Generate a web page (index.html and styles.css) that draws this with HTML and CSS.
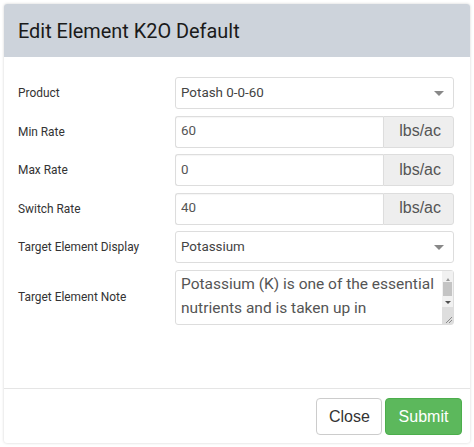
FILE: index.html
```html
<!DOCTYPE html>
<html>
<head>
<meta charset="utf-8">
<link rel="stylesheet" href="styles.css">
</head>
<body>
<div class="modal">
  <div class="modal-header">
    <h4 class="modal-title">Edit Element K2O Default</h4>
  </div>
  <div class="modal-body">
    <div class="form-row">
      <label class="form-label">Product</label>
      <div class="select">
        <span class="select-value">Potash 0-0-60</span>
        <span class="select-arrow"></span>
      </div>
    </div>
    <div class="form-row">
      <label class="form-label">Min Rate</label>
      <div class="input-group">
        <input class="input" type="text" value="60">
        <span class="addon">lbs/ac</span>
      </div>
    </div>
    <div class="form-row">
      <label class="form-label">Max Rate</label>
      <div class="input-group">
        <input class="input" type="text" value="0">
        <span class="addon">lbs/ac</span>
      </div>
    </div>
    <div class="form-row">
      <label class="form-label">Switch Rate</label>
      <div class="input-group">
        <input class="input" type="text" value="40">
        <span class="addon">lbs/ac</span>
      </div>
    </div>
    <div class="form-row">
      <label class="form-label">Target Element Display</label>
      <div class="select">
        <span class="select-value">Potassium</span>
        <span class="select-arrow"></span>
      </div>
    </div>
    <div class="form-row form-row-tall">
      <label class="form-label">Target Element Note</label>
      <div class="textarea-wrap">
        <textarea class="textarea">Potassium (K) is one of the essential nutrients and is taken up in significant amounts by crops. Potassium is vital to photosynthesis and water regulation.</textarea>
        <div class="scrollbar">
          <span class="sb-up"></span>
          <span class="sb-thumb"></span>
          <span class="sb-space"></span>
          <span class="sb-down"></span>
          <span class="sb-corner">
            <svg width="10" height="10" viewBox="0 0 10 10"><path d="M9 3 L3 9 M9 6 L6 9" stroke="#8a8a8a" stroke-width="1" fill="none"/></svg>
          </span>
        </div>
      </div>
    </div>
  </div>
  <div class="modal-footer">
    <button class="btn btn-default">Close</button>
    <button class="btn btn-success">Submit</button>
  </div>
</div>
</body>
</html>
```
FILE: styles.css
```css
html, body {
  margin: 0;
  padding: 0;
  background: #ffffff;
}
body {
  font-family: Roboto, "Liberation Sans", sans-serif;
  color: #333;
}
.modal {
  margin: 4px;
  width: 466px;
  height: 439px;
  box-sizing: border-box;
  background: #fff;
  border-radius: 3px;
  box-shadow: 0 0 3px rgba(0,0,0,0.18);
  display: flex;
  flex-direction: column;
  overflow: hidden;
}
.modal-header {
  background: #cdd3db;
  height: 53px;
  display: flex;
  align-items: center;
  padding: 0 14px;
  flex: none;
}
.modal-title {
  margin: 0;
  font-size: 19.9px;
  font-weight: 400;
  color: #1a1a1a;
  padding-top: 1px;
}
.modal-body {
  padding: 20px 16px 0 14px;
  display: flex;
  flex-direction: column;
  gap: 6.5px;
  flex: 1;
}
.form-row {
  display: grid;
  grid-template-columns: 157px 1fr;
  align-items: center;
  height: 32px;
}
.form-row-tall {
  height: 55px;
}
.form-label {
  font-size: 11.9px;
  color: #333;
}
.select {
  height: 32px;
  box-sizing: border-box;
  border: 1px solid #ddd;
  border-radius: 3px;
  display: flex;
  align-items: center;
  justify-content: space-between;
  padding: 0 9px 2px 5px;
}
.select-value {
  font-size: 13.4px;
  color: #444;
}
.select-arrow {
  width: 0;
  height: 0;
  border-left: 5px solid transparent;
  border-right: 5px solid transparent;
  border-top: 5px solid #888;
  margin-top: 2px;
}
.input-group {
  display: flex;
  height: 32px;
}
.input {
  flex: 1;
  min-width: 0;
  height: 32px;
  box-sizing: border-box;
  border: 1px solid #ddd;
  border-right: none;
  border-radius: 3px 0 0 3px;
  padding: 0 5px 2px 5px;
  font-family: Roboto, "Liberation Sans", sans-serif;
  font-size: 13.4px;
  color: #555;
  box-shadow: inset 0 1px 1px rgba(0,0,0,0.04);
  outline: none;
}
.addon {
  width: 71px;
  box-sizing: border-box;
  background: #eee;
  border: 1px solid #ddd;
  border-radius: 0 3px 3px 0;
  display: flex;
  align-items: center;
  justify-content: flex-end;
  padding: 0 12px 1px 0;
  font-family: "Liberation Sans", Arial, sans-serif;
  font-size: 16px;
  color: #555;
}
.textarea-wrap {
  position: relative;
  height: 55px;
}
.textarea {
  display: block;
  height: 55px;
  box-sizing: border-box;
  width: 100%;
  border: 1px solid #ddd;
  border-radius: 3px;
  padding: 1px 16px 1px 5px;
  font-family: Roboto, "Liberation Sans", sans-serif;
  font-size: 15.5px;
  line-height: 24px;
  color: #555;
  resize: none;
  outline: none;
  overflow: hidden;
  margin: 0;
}
.scrollbar {
  position: absolute;
  top: 1px;
  right: 1px;
  bottom: 1px;
  width: 11px;
  background: #f1f1f1;
  display: flex;
  flex-direction: column;
  align-items: center;
}
.sb-up {
  flex: none;
  margin-top: 4px;
  height: 6px;
  width: 0;
  border-left: 2.5px solid transparent;
  border-right: 2.5px solid transparent;
  border-bottom: 3px solid #9a9a9a;
  box-sizing: border-box;
}
.sb-thumb {
  flex: none;
  margin-top: 1px;
  width: 9px;
  height: 14px;
  background: #c4c4c4;
}
.sb-space {
  flex: 1;
}
.sb-down {
  flex: none;
  margin-bottom: 3px;
  width: 0;
  height: 0;
  border-left: 3px solid transparent;
  border-right: 3px solid transparent;
  border-top: 3.5px solid #505050;
}
.sb-corner {
  flex: none;
  width: 11px;
  height: 17px;
  background: #dedede;
  display: flex;
  align-items: flex-end;
  justify-content: flex-end;
}
.sb-corner svg {
  display: block;
}
.modal-footer {
  border-top: 1px solid #e5e5e5;
  height: 55px;
  box-sizing: border-box;
  display: flex;
  justify-content: flex-end;
  align-items: flex-start;
  gap: 3px;
  padding: 9px 8px 0 0;
  flex: none;
}
.btn {
  height: 37px;
  box-sizing: border-box;
  border-radius: 4px;
  font-family: "Liberation Sans", Arial, sans-serif;
  font-size: 16px;
  padding: 0 12px;
  cursor: pointer;
}
.btn-default {
  background: #fff;
  border: 1px solid #ccc;
  color: #333;
  width: 66px;
}
.btn-success {
  background: #5cb85c;
  border: 1px solid #4cae4c;
  color: #fff;
  width: 77px;
}
```
